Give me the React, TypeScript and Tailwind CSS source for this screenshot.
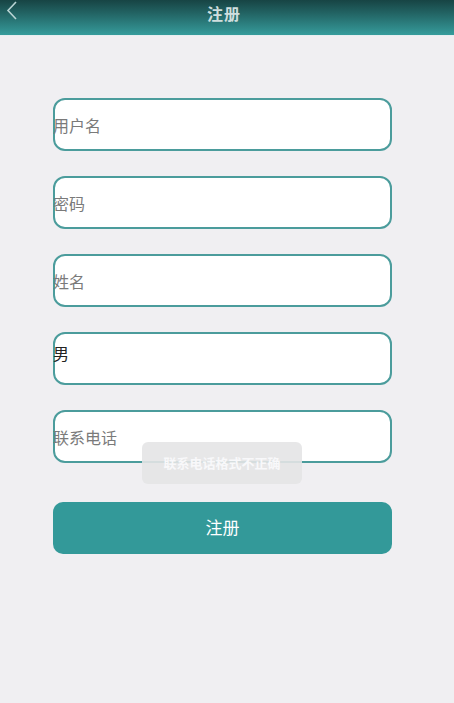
import React from 'react';

const font = { fontFamily: '"Noto Sans CJK SC", "Liberation Sans", sans-serif' };

function Field({ label, value }: { label: string; value?: boolean }) {
  return (
    <div className="h-[53px] w-full rounded-[12px] border-2 border-[#4b9c9c] bg-white flex items-center">
      <span className={value ? 'ml-[-2px] text-[16px] text-[#222] self-start mt-[11px] leading-none' : 'ml-[-2px] text-[16px] text-[#7a7a7a] leading-none'}>{label}</span>
    </div>
  );
}

export default function App() {
  return (
    <div className="relative w-[454px] h-[703px] bg-[#f0eff2] overflow-hidden" style={font}>
      {/* Header */}
      <div className="relative h-[36px] bg-gradient-to-b from-[#174444] to-[#369c9c] flex justify-center pt-[3px] border-b border-[#e6eef0]">
        <svg className="absolute left-[5px] top-[1px]" width="14" height="20" viewBox="0 0 14 20">
          <path d="M11 1 L3 9.5 L11 18" fill="none" stroke="#b9d4d4" strokeWidth="1.6" />
        </svg>
        <span className="ml-[-6px] text-[16px] font-bold text-[#cfdede] tracking-[1px] leading-[20px]">注册</span>
      </div>

      <div className="px-[53px] pt-[62px] w-[445px] flex flex-col gap-[25px]">
        <Field label="用户名" />
        <Field label="密码" />
        <Field label="姓名" />
        <Field label="男" value />
        <Field label="联系电话" />
        <button className="mt-[14px] h-[52px] w-full rounded-[10px] bg-[#339999] text-white text-[17px] leading-none pb-[3px]">
          注册
        </button>
      </div>

      {/* Toast */}
      <div className="absolute left-[142px] top-[442px] w-[160px] h-[42px] rounded-[6px] bg-[#e4e4e6]/90 flex items-center justify-center">
        <span className="text-[13px] font-bold text-[#f8f8fa]">联系电话格式不正确</span>
      </div>
    </div>
  );
}
